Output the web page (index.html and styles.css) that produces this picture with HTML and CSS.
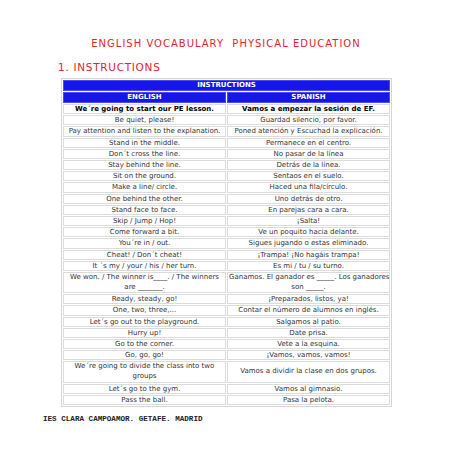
FILE: index.html
```html
<!DOCTYPE html>
<html lang="en">
<head>
    <meta charset="UTF-8">
    <title>English Vocabulary Physical Education</title>
    <link rel="stylesheet" href="styles.css">
</head>
<body>

<div id="page">
    <div id="doc-title">ENGLISH VOCABULARY&nbsp; PHYSICAL EDUCATION</div>
    <div id="section-title">1. INSTRUCTIONS</div>

    <table id="vocab">
        <tr><th colspan="2" class="main-head">INSTRUCTIONS</th></tr>
        <tr><th>ENGLISH</th><th>SPANISH</th></tr>
        <tr class="bold-row"><td>We´re going to start our PE lesson.</td><td>Vamos a empezar la sesión de EF.</td></tr>
        <tr><td>Be quiet, please!</td><td>Guardad silencio, por favor.</td></tr>
        <tr><td>Pay attention and listen to the explanation.</td><td>Poned atención y Escuchad la explicación.</td></tr>
        <tr><td>Stand in the middle.</td><td>Permanece en el centro.</td></tr>
        <tr><td>Don´t cross the line.</td><td>No pasar de la línea</td></tr>
        <tr><td>Stay behind the line.</td><td>Detrás de la línea.</td></tr>
        <tr><td>Sit on the ground.</td><td>Sentaos en el suelo.</td></tr>
        <tr><td>Make a line/ circle.</td><td>Haced una fila/círculo.</td></tr>
        <tr><td>One behind the other.</td><td>Uno detrás de otro.</td></tr>
        <tr><td>Stand face to face.</td><td>En parejas cara a cara.</td></tr>
        <tr><td>Skip / Jump / Hop!</td><td>¡Salta!</td></tr>
        <tr><td>Come forward a bit.</td><td>Ve un poquito hacia delante.</td></tr>
        <tr><td>You´re in / out.</td><td>Sigues jugando o estas eliminado.</td></tr>
        <tr><td>Cheat! / Don´t cheat!</td><td>¡Trampa! ¡No hagáis trampa!</td></tr>
        <tr><td>It ´s my / your / his / her turn.</td><td>Es mi / tu / su turno.</td></tr>
        <tr class="two-line"><td>We won. / The winner is____. / The winners<br>are _______.</td><td>Ganamos. El ganador es _____. Los ganadores<br>son _____.</td></tr>
        <tr><td>Ready, steady, go!</td><td>¡Preparados, listos, ya!</td></tr>
        <tr><td>One, two, three,...</td><td>Contar el número de alumnos en inglés.</td></tr>
        <tr><td>Let´s go out to the playground.</td><td>Salgamos al patio.</td></tr>
        <tr><td>Hurry up!</td><td>Date prisa.</td></tr>
        <tr><td>Go to the corner.</td><td>Vete a la esquina.</td></tr>
        <tr><td>Go, go, go!</td><td>¡Vamos, vamos, vamos!</td></tr>
        <tr class="two-line"><td>We´re going to divide the class into two<br>groups</td><td>Vamos a dividir la clase en dos grupos.</td></tr>
        <tr><td>Let´s go to the gym.</td><td>Vamos al gimnasio.</td></tr>
        <tr><td>Pass the ball.</td><td>Pasa la pelota.</td></tr>
    </table>

    <div id="footer">IES CLARA CAMPOAMOR. GETAFE. MADRID</div>
</div>

</body>
</html>
```

FILE: styles.css
```css
body {
    margin: 0;
    background-color: #ffffff;
    font-family: 'DejaVu Sans', Verdana, sans-serif;
}
#page {
    padding-top: 38px;
    padding-left: 58px;
    width: 336px;
}
#doc-title {
    font-size: 10px;
    letter-spacing: 1px;
    color: #e0262c;
    text-align: center;
    line-height: 12px;
    white-space: nowrap;
}
#section-title {
    font-size: 10.5px;
    letter-spacing: 0.7px;
    color: #e0262c;
    margin-top: 11px;
    line-height: 12px;
}
#vocab {
    margin-top: 5px;
    margin-left: 3px;
    width: 331px;
    border: 1px solid #d6d6d6;
    border-spacing: 1px;
    table-layout: fixed;
    font-size: 7px;
    color: #333;
}
#vocab th {
    background-color: #1616e8;
    color: #ffffff;
    font-weight: bold;
    font-size: 7px;
    height: 9px;
    line-height: 9px;
    padding: 0;
    border: 1px solid #4a4af0;
}
#vocab td {
    text-align: center;
    border: 1px solid #dcdcdc;
    padding: 0 1px;
    line-height: 8.2px;
    white-space: nowrap;
    overflow: hidden;
}
#vocab .two-line td {
    line-height: 9.6px;
}
#vocab .bold-row td {
    font-weight: bold;
    color: #000;
}
#footer {
    font-family: 'Liberation Mono', 'Courier New', monospace;
    font-weight: bold;
    font-size: 7.6px;
    color: #222;
    margin-top: 8px;
    margin-left: -15px;
}
```
